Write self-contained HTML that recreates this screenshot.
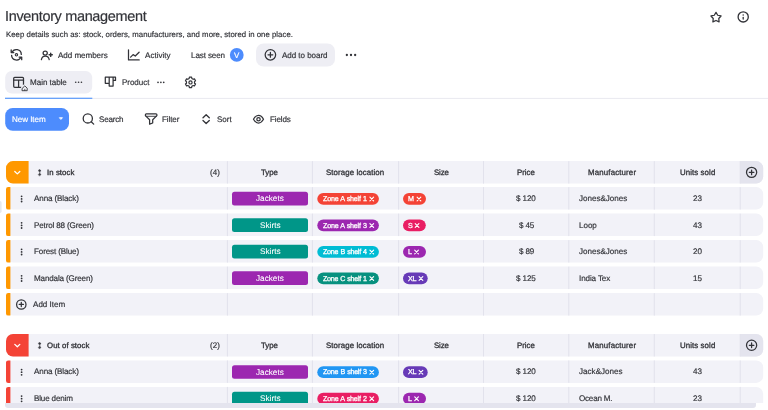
<!DOCTYPE html>
<html><head><meta charset="utf-8"><title>Inventory management</title>
<style>
html,body{margin:0;padding:0;background:#fff;}
body{width:768px;height:410px;position:relative;overflow:hidden;font-family:"Liberation Sans", sans-serif;color:#323338;}
.t{position:absolute;white-space:nowrap;font-family:"Liberation Sans", sans-serif;transform:skewX(.3deg);-webkit-text-stroke:.18px;}
.b{position:absolute;box-sizing:border-box;}
</style></head><body>
<svg class="b" style="left:0;top:0" width="768" height="410" viewBox="0 0 768 410">
<rect x="229.85" y="48" width="13.8" height="13.8" rx="6.9" fill="#4d8cfd"/>
<rect x="256" y="43.6" width="79" height="22.8" rx="7.5" fill="#eeeef4"/>
<rect x="345.7" y="53.85" width="2.3" height="2.3" rx="1.15" fill="#323338"/>
<rect x="349.85" y="53.85" width="2.3" height="2.3" rx="1.15" fill="#323338"/>
<rect x="354" y="53.85" width="2.3" height="2.3" rx="1.15" fill="#323338"/>
<rect x="5.2" y="71" width="87" height="22.5" rx="6.5" fill="#eeeef4"/>
<rect x="74.9" y="81.4" width="1.65" height="1.65" rx="0.82" fill="#323338"/>
<rect x="77.75" y="81.4" width="1.65" height="1.65" rx="0.82" fill="#323338"/>
<rect x="80.6" y="81.4" width="1.65" height="1.65" rx="0.82" fill="#323338"/>
<rect x="157.2" y="81.6" width="1.65" height="1.65" rx="0.82" fill="#323338"/>
<rect x="160.05" y="81.6" width="1.65" height="1.65" rx="0.82" fill="#323338"/>
<rect x="162.9" y="81.6" width="1.65" height="1.65" rx="0.82" fill="#323338"/>
<rect x="5" y="97.9" width="763" height="0.9" fill="#e6e6ee"/>
<rect x="5" y="97.7" width="87.3" height="1.2" fill="#5b9bfb"/>
<rect x="5.2" y="108" width="63.8" height="22.7" rx="7.5" fill="#4d8cfd"/>
<rect x="6" y="161.1" width="757.2" height="22.5" rx="7" fill="#f2f2f8"/>
<path d="M740.2 161.1H756.2A7 7 0 0 1 763.2 168.1V176.6A7 7 0 0 1 756.2 183.6H740.2V161.1z" fill="#e4e4ee"/>
<path d="M13 161.1H28.6V183.6H13A7 7 0 0 1 6 176.6V168.1A7 7 0 0 1 13 161.1z" fill="#ff9800"/>
<rect x="226.9" y="161.1" width="1" height="22.5" fill="#e2e2ec"/>
<rect x="311.9" y="161.1" width="1" height="22.5" fill="#e2e2ec"/>
<rect x="398.1" y="161.1" width="1" height="22.5" fill="#e2e2ec"/>
<rect x="483" y="161.1" width="1" height="22.5" fill="#e2e2ec"/>
<rect x="568.3" y="161.1" width="1" height="22.5" fill="#e2e2ec"/>
<rect x="653.8" y="161.1" width="1" height="22.5" fill="#e2e2ec"/>
<rect x="739.7" y="161.1" width="1" height="22.5" fill="#e2e2ec"/>
<rect x="6" y="187.1" width="757.2" height="22.5" rx="7" fill="#f2f2f8"/>
<path d="M8.2 187.1H10.4V209.6H8.2A2.2 2.2 0 0 1 6 207.4V189.3A2.2 2.2 0 0 1 8.2 187.1z" fill="#ff9800"/>
<rect x="20.7" y="195.4" width="1.8" height="1.8" rx="0.9" fill="#323338"/>
<rect x="20.7" y="198" width="1.8" height="1.8" rx="0.9" fill="#323338"/>
<rect x="20.7" y="200.6" width="1.8" height="1.8" rx="0.9" fill="#323338"/>
<rect x="226.9" y="187.1" width="1" height="22.5" fill="#e2e2ec"/>
<rect x="311.9" y="187.1" width="1" height="22.5" fill="#e2e2ec"/>
<rect x="398.1" y="187.1" width="1" height="22.5" fill="#e2e2ec"/>
<rect x="483" y="187.1" width="1" height="22.5" fill="#e2e2ec"/>
<rect x="568.3" y="187.1" width="1" height="22.5" fill="#e2e2ec"/>
<rect x="653.8" y="187.1" width="1" height="22.5" fill="#e2e2ec"/>
<rect x="739.7" y="187.1" width="1" height="22.5" fill="#e2e2ec"/>
<rect x="232" y="191.85" width="76" height="13.6" rx="2.5" fill="#9c27b0"/>
<rect x="317.3" y="192.9" width="61.6" height="11.9" rx="5.95" fill="#f44336"/>
<rect x="403" y="192.9" width="23" height="11.9" rx="5.95" fill="#f44336"/>
<rect x="6" y="213.6" width="757.2" height="22.5" rx="7" fill="#f2f2f8"/>
<path d="M8.2 213.6H10.4V236.1H8.2A2.2 2.2 0 0 1 6 233.9V215.8A2.2 2.2 0 0 1 8.2 213.6z" fill="#ff9800"/>
<rect x="20.7" y="221.9" width="1.8" height="1.8" rx="0.9" fill="#323338"/>
<rect x="20.7" y="224.5" width="1.8" height="1.8" rx="0.9" fill="#323338"/>
<rect x="20.7" y="227.1" width="1.8" height="1.8" rx="0.9" fill="#323338"/>
<rect x="226.9" y="213.6" width="1" height="22.5" fill="#e2e2ec"/>
<rect x="311.9" y="213.6" width="1" height="22.5" fill="#e2e2ec"/>
<rect x="398.1" y="213.6" width="1" height="22.5" fill="#e2e2ec"/>
<rect x="483" y="213.6" width="1" height="22.5" fill="#e2e2ec"/>
<rect x="568.3" y="213.6" width="1" height="22.5" fill="#e2e2ec"/>
<rect x="653.8" y="213.6" width="1" height="22.5" fill="#e2e2ec"/>
<rect x="739.7" y="213.6" width="1" height="22.5" fill="#e2e2ec"/>
<rect x="232" y="218.35" width="76" height="13.6" rx="2.5" fill="#009688"/>
<rect x="317.3" y="219.4" width="61.6" height="11.9" rx="5.95" fill="#9c27b0"/>
<rect x="403" y="219.4" width="22.8" height="11.9" rx="5.95" fill="#e91e63"/>
<rect x="6" y="240.1" width="757.2" height="22.5" rx="7" fill="#f2f2f8"/>
<path d="M8.2 240.1H10.4V262.6H8.2A2.2 2.2 0 0 1 6 260.4V242.3A2.2 2.2 0 0 1 8.2 240.1z" fill="#ff9800"/>
<rect x="20.7" y="248.4" width="1.8" height="1.8" rx="0.9" fill="#323338"/>
<rect x="20.7" y="251" width="1.8" height="1.8" rx="0.9" fill="#323338"/>
<rect x="20.7" y="253.6" width="1.8" height="1.8" rx="0.9" fill="#323338"/>
<rect x="226.9" y="240.1" width="1" height="22.5" fill="#e2e2ec"/>
<rect x="311.9" y="240.1" width="1" height="22.5" fill="#e2e2ec"/>
<rect x="398.1" y="240.1" width="1" height="22.5" fill="#e2e2ec"/>
<rect x="483" y="240.1" width="1" height="22.5" fill="#e2e2ec"/>
<rect x="568.3" y="240.1" width="1" height="22.5" fill="#e2e2ec"/>
<rect x="653.8" y="240.1" width="1" height="22.5" fill="#e2e2ec"/>
<rect x="739.7" y="240.1" width="1" height="22.5" fill="#e2e2ec"/>
<rect x="232" y="244.85" width="76" height="13.6" rx="2.5" fill="#009688"/>
<rect x="317.3" y="245.9" width="61.6" height="11.9" rx="5.95" fill="#00bcd4"/>
<rect x="403" y="245.9" width="23" height="11.9" rx="5.95" fill="#9c27b0"/>
<rect x="6" y="266.6" width="757.2" height="22.5" rx="7" fill="#f2f2f8"/>
<path d="M8.2 266.6H10.4V289.1H8.2A2.2 2.2 0 0 1 6 286.9V268.8A2.2 2.2 0 0 1 8.2 266.6z" fill="#ff9800"/>
<rect x="20.7" y="274.9" width="1.8" height="1.8" rx="0.9" fill="#323338"/>
<rect x="20.7" y="277.5" width="1.8" height="1.8" rx="0.9" fill="#323338"/>
<rect x="20.7" y="280.1" width="1.8" height="1.8" rx="0.9" fill="#323338"/>
<rect x="226.9" y="266.6" width="1" height="22.5" fill="#e2e2ec"/>
<rect x="311.9" y="266.6" width="1" height="22.5" fill="#e2e2ec"/>
<rect x="398.1" y="266.6" width="1" height="22.5" fill="#e2e2ec"/>
<rect x="483" y="266.6" width="1" height="22.5" fill="#e2e2ec"/>
<rect x="568.3" y="266.6" width="1" height="22.5" fill="#e2e2ec"/>
<rect x="653.8" y="266.6" width="1" height="22.5" fill="#e2e2ec"/>
<rect x="739.7" y="266.6" width="1" height="22.5" fill="#e2e2ec"/>
<rect x="232" y="271.35" width="76" height="13.6" rx="2.5" fill="#9c27b0"/>
<rect x="317.3" y="272.4" width="61.6" height="11.9" rx="5.95" fill="#07917f"/>
<rect x="403" y="272.4" width="24.7" height="11.9" rx="5.95" fill="#673ab7"/>
<rect x="6" y="293.1" width="757.2" height="22.5" rx="7" fill="#f2f2f8"/>
<path d="M8.2 293.1H10.4V315.6H8.2A2.2 2.2 0 0 1 6 313.4V295.3A2.2 2.2 0 0 1 8.2 293.1z" fill="#ff9800"/>
<rect x="226.9" y="293.1" width="1" height="22.5" fill="#e2e2ec"/>
<rect x="311.9" y="293.1" width="1" height="22.5" fill="#e2e2ec"/>
<rect x="398.1" y="293.1" width="1" height="22.5" fill="#e2e2ec"/>
<rect x="483" y="293.1" width="1" height="22.5" fill="#e2e2ec"/>
<rect x="568.3" y="293.1" width="1" height="22.5" fill="#e2e2ec"/>
<rect x="653.8" y="293.1" width="1" height="22.5" fill="#e2e2ec"/>
<rect x="739.7" y="293.1" width="1" height="22.5" fill="#e2e2ec"/>
<rect x="6" y="334" width="757.2" height="22.5" rx="7" fill="#f2f2f8"/>
<path d="M740.2 334H756.2A7 7 0 0 1 763.2 341V349.5A7 7 0 0 1 756.2 356.5H740.2V334z" fill="#e4e4ee"/>
<path d="M13 334H28.6V356.5H13A7 7 0 0 1 6 349.5V341A7 7 0 0 1 13 334z" fill="#f44336"/>
<rect x="226.9" y="334" width="1" height="22.5" fill="#e2e2ec"/>
<rect x="311.9" y="334" width="1" height="22.5" fill="#e2e2ec"/>
<rect x="398.1" y="334" width="1" height="22.5" fill="#e2e2ec"/>
<rect x="483" y="334" width="1" height="22.5" fill="#e2e2ec"/>
<rect x="568.3" y="334" width="1" height="22.5" fill="#e2e2ec"/>
<rect x="653.8" y="334" width="1" height="22.5" fill="#e2e2ec"/>
<rect x="739.7" y="334" width="1" height="22.5" fill="#e2e2ec"/>
<rect x="6" y="360.4" width="757.2" height="22.5" rx="7" fill="#f2f2f8"/>
<path d="M8.2 360.4H10.4V382.9H8.2A2.2 2.2 0 0 1 6 380.7V362.6A2.2 2.2 0 0 1 8.2 360.4z" fill="#f44336"/>
<rect x="20.7" y="368.7" width="1.8" height="1.8" rx="0.9" fill="#323338"/>
<rect x="20.7" y="371.3" width="1.8" height="1.8" rx="0.9" fill="#323338"/>
<rect x="20.7" y="373.9" width="1.8" height="1.8" rx="0.9" fill="#323338"/>
<rect x="226.9" y="360.4" width="1" height="22.5" fill="#e2e2ec"/>
<rect x="311.9" y="360.4" width="1" height="22.5" fill="#e2e2ec"/>
<rect x="398.1" y="360.4" width="1" height="22.5" fill="#e2e2ec"/>
<rect x="483" y="360.4" width="1" height="22.5" fill="#e2e2ec"/>
<rect x="568.3" y="360.4" width="1" height="22.5" fill="#e2e2ec"/>
<rect x="653.8" y="360.4" width="1" height="22.5" fill="#e2e2ec"/>
<rect x="739.7" y="360.4" width="1" height="22.5" fill="#e2e2ec"/>
<rect x="232" y="365.15" width="76" height="13.6" rx="2.5" fill="#9c27b0"/>
<rect x="317.3" y="366.2" width="61.6" height="11.9" rx="5.95" fill="#2196f3"/>
<rect x="403" y="366.2" width="24.7" height="11.9" rx="5.95" fill="#673ab7"/>
<rect x="6" y="386.9" width="757.2" height="22.5" rx="7" fill="#f2f2f8"/>
<path d="M8.2 386.9H10.4V409.4H8.2A2.2 2.2 0 0 1 6 407.2V389.1A2.2 2.2 0 0 1 8.2 386.9z" fill="#f44336"/>
<rect x="20.7" y="395.2" width="1.8" height="1.8" rx="0.9" fill="#323338"/>
<rect x="20.7" y="397.8" width="1.8" height="1.8" rx="0.9" fill="#323338"/>
<rect x="20.7" y="400.4" width="1.8" height="1.8" rx="0.9" fill="#323338"/>
<rect x="226.9" y="386.9" width="1" height="22.5" fill="#e2e2ec"/>
<rect x="311.9" y="386.9" width="1" height="22.5" fill="#e2e2ec"/>
<rect x="398.1" y="386.9" width="1" height="22.5" fill="#e2e2ec"/>
<rect x="483" y="386.9" width="1" height="22.5" fill="#e2e2ec"/>
<rect x="568.3" y="386.9" width="1" height="22.5" fill="#e2e2ec"/>
<rect x="653.8" y="386.9" width="1" height="22.5" fill="#e2e2ec"/>
<rect x="739.7" y="386.9" width="1" height="22.5" fill="#e2e2ec"/>
<rect x="232" y="391.65" width="76" height="13.6" rx="2.5" fill="#009688"/>
<rect x="317.3" y="392.7" width="61.6" height="11.9" rx="5.95" fill="#e91e63"/>
<rect x="403" y="392.7" width="23" height="11.9" rx="5.95" fill="#9c27b0"/>
<rect x="-2" y="201" width="3.6" height="12" rx="1.8" fill="#e6e9ef"/>
</svg>
<div class="b" style="left:0;top:0;width:768px;height:410px;will-change:transform">
<div class="t" style="top:7.78px;font-size:14.5px;line-height:17.4px;letter-spacing:-0.350px;left:5.3px;">Inventory management</div>
<div class="t" style="top:29.62px;font-size:7.8px;line-height:9.36px;letter-spacing:0.027px;left:5.6px;">Keep details such as: stock, orders, manufacturers, and more, stored in one place.</div>
<div class="t" style="top:50.73px;font-size:8.1px;line-height:9.72px;letter-spacing:-0.067px;left:57.7px;">Add members</div>
<div class="t" style="top:50.73px;font-size:8.1px;line-height:9.72px;letter-spacing:-0.024px;left:145.3px;">Activity</div>
<div class="t" style="top:50.73px;font-size:8.1px;line-height:9.72px;letter-spacing:-0.129px;left:190.7px;">Last seen</div>
<div class="t" style="top:50.93px;font-size:8px;line-height:9.6px;color:#fff;left:234.05px;">V</div>
<div class="t" style="top:50.73px;font-size:8.1px;line-height:9.72px;letter-spacing:-0.076px;left:281.7px;">Add to board</div>
<div class="t" style="top:77.73px;font-size:8.1px;line-height:9.72px;letter-spacing:-0.059px;left:30px;">Main table</div>
<div class="t" style="top:77.73px;font-size:8.1px;line-height:9.72px;letter-spacing:-0.080px;left:121.7px;">Product</div>
<div class="t" style="top:114.73px;font-size:8.1px;line-height:9.72px;color:#fff;letter-spacing:-0.080px;left:12.2px;">New Item</div>
<div class="t" style="top:114.73px;font-size:8.1px;line-height:9.72px;letter-spacing:-0.218px;left:99.4px;">Search</div>
<div class="t" style="top:114.73px;font-size:8.1px;line-height:9.72px;letter-spacing:-0.125px;left:162.4px;">Filter</div>
<div class="t" style="top:114.73px;font-size:8.1px;line-height:9.72px;letter-spacing:-0.053px;left:217.4px;">Sort</div>
<div class="t" style="top:114.73px;font-size:8.1px;line-height:9.72px;letter-spacing:-0.141px;left:269.7px;">Fields</div>
<div class="t" style="top:168.12px;font-size:7.8px;line-height:9.36px;letter-spacing:0.072px;left:47.2px;-webkit-text-stroke:0.330px #323338;">In stock</div>
<div class="t" style="top:168.13px;font-size:8px;line-height:9.6px;letter-spacing:0.123px;left:210.22px;">(4)</div>
<div class="t" style="top:168.22px;font-size:7.9px;line-height:9.48px;letter-spacing:-0.040px;left:261.38px;-webkit-text-stroke:0.300px #323338;">Type</div>
<div class="t" style="top:168.22px;font-size:7.9px;line-height:9.48px;letter-spacing:0.070px;left:326.43px;-webkit-text-stroke:0.300px #323338;">Storage location</div>
<div class="t" style="top:168.22px;font-size:7.9px;line-height:9.48px;letter-spacing:-0.152px;left:433.57px;-webkit-text-stroke:0.300px #323338;">Size</div>
<div class="t" style="top:168.22px;font-size:7.9px;line-height:9.48px;letter-spacing:-0.027px;left:517.19px;-webkit-text-stroke:0.300px #323338;">Price</div>
<div class="t" style="top:168.22px;font-size:7.9px;line-height:9.48px;letter-spacing:0.138px;left:587.52px;-webkit-text-stroke:0.300px #323338;">Manufacturer</div>
<div class="t" style="top:168.22px;font-size:7.9px;line-height:9.48px;letter-spacing:0.069px;left:679.58px;-webkit-text-stroke:0.300px #323338;">Units sold</div>
<div class="t" style="top:194.03px;font-size:8.1px;line-height:9.72px;letter-spacing:-0.133px;left:33.7px;">Anna (Black)</div>
<div class="t" style="top:194.34px;font-size:8.2px;line-height:9.84px;color:#fff;letter-spacing:-0.002px;left:256.1px;-webkit-text-stroke:0.080px #fff;">Jackets</div>
<div class="t" style="top:195.04px;font-size:7.2px;line-height:8.64px;color:#fff;letter-spacing:-0.236px;left:322.5px;-webkit-text-stroke:0.280px #fff;word-spacing:0.500px;">Zone A shelf 1</div>
<div class="t" style="top:195.04px;font-size:7.2px;line-height:8.64px;color:#fff;letter-spacing:0.055px;left:408.2px;-webkit-text-stroke:0.280px #fff;word-spacing:0.500px;">M</div>
<div class="t" style="top:194.03px;font-size:8.1px;line-height:9.72px;letter-spacing:-0.123px;left:516.39px;">$ 120</div>
<div class="t" style="top:194.03px;font-size:8.1px;line-height:9.72px;letter-spacing:-0.042px;left:578.7px;">Jones&amp;Jones</div>
<div class="t" style="top:194.03px;font-size:8.1px;line-height:9.72px;letter-spacing:0.017px;left:692.76px;">23</div>
<div class="t" style="top:220.53px;font-size:8.1px;line-height:9.72px;letter-spacing:-0.164px;left:33.7px;">Petrol 88 (Green)</div>
<div class="t" style="top:220.84px;font-size:8.2px;line-height:9.84px;color:#fff;letter-spacing:0.013px;left:259.71px;-webkit-text-stroke:0.080px #fff;">Skirts</div>
<div class="t" style="top:221.54px;font-size:7.2px;line-height:8.64px;color:#fff;letter-spacing:-0.236px;left:322.5px;-webkit-text-stroke:0.280px #fff;word-spacing:0.500px;">Zone A shelf 3</div>
<div class="t" style="top:221.54px;font-size:7.2px;line-height:8.64px;color:#fff;letter-spacing:-0.642px;left:408.2px;-webkit-text-stroke:0.280px #fff;word-spacing:0.500px;">S</div>
<div class="t" style="top:220.53px;font-size:8.1px;line-height:9.72px;letter-spacing:-0.154px;left:518.62px;">$ 45</div>
<div class="t" style="top:220.53px;font-size:8.1px;line-height:9.72px;letter-spacing:-0.067px;left:578.7px;">Loop</div>
<div class="t" style="top:220.53px;font-size:8.1px;line-height:9.72px;letter-spacing:0.017px;left:692.76px;">43</div>
<div class="t" style="top:247.03px;font-size:8.1px;line-height:9.72px;letter-spacing:-0.141px;left:33.7px;">Forest (Blue)</div>
<div class="t" style="top:247.34px;font-size:8.2px;line-height:9.84px;color:#fff;letter-spacing:0.013px;left:259.71px;-webkit-text-stroke:0.080px #fff;">Skirts</div>
<div class="t" style="top:248.04px;font-size:7.2px;line-height:8.64px;color:#fff;letter-spacing:-0.293px;left:322.5px;-webkit-text-stroke:0.280px #fff;word-spacing:0.500px;">Zone B shelf 4</div>
<div class="t" style="top:248.04px;font-size:7.2px;line-height:8.64px;color:#fff;letter-spacing:-0.345px;left:408.2px;-webkit-text-stroke:0.280px #fff;word-spacing:0.500px;">L</div>
<div class="t" style="top:247.03px;font-size:8.1px;line-height:9.72px;letter-spacing:-0.154px;left:518.62px;">$ 89</div>
<div class="t" style="top:247.03px;font-size:8.1px;line-height:9.72px;letter-spacing:-0.042px;left:578.7px;">Jones&amp;Jones</div>
<div class="t" style="top:247.03px;font-size:8.1px;line-height:9.72px;letter-spacing:0.017px;left:692.76px;">20</div>
<div class="t" style="top:273.53px;font-size:8.1px;line-height:9.72px;letter-spacing:-0.163px;left:33.7px;">Mandala (Green)</div>
<div class="t" style="top:273.84px;font-size:8.2px;line-height:9.84px;color:#fff;letter-spacing:-0.002px;left:256.1px;-webkit-text-stroke:0.080px #fff;">Jackets</div>
<div class="t" style="top:274.54px;font-size:7.2px;line-height:8.64px;color:#fff;letter-spacing:-0.321px;left:322.5px;-webkit-text-stroke:0.280px #fff;word-spacing:0.500px;">Zone C shelf 1</div>
<div class="t" style="top:274.54px;font-size:7.2px;line-height:8.64px;color:#fff;letter-spacing:-0.371px;left:408.2px;-webkit-text-stroke:0.280px #fff;word-spacing:0.500px;">XL</div>
<div class="t" style="top:273.53px;font-size:8.1px;line-height:9.72px;letter-spacing:-0.123px;left:516.39px;">$ 125</div>
<div class="t" style="top:273.53px;font-size:8.1px;line-height:9.72px;letter-spacing:-0.122px;left:578.7px;">India Tex</div>
<div class="t" style="top:273.53px;font-size:8.1px;line-height:9.72px;letter-spacing:0.017px;left:692.76px;">15</div>
<div class="t" style="top:300.03px;font-size:8.1px;line-height:9.72px;letter-spacing:-0.032px;left:32.7px;">Add Item</div>
<div class="t" style="top:341.02px;font-size:7.8px;line-height:9.36px;letter-spacing:0.070px;left:47.2px;-webkit-text-stroke:0.330px #323338;">Out of stock</div>
<div class="t" style="top:341.03px;font-size:8px;line-height:9.6px;letter-spacing:0.123px;left:210.22px;">(2)</div>
<div class="t" style="top:341.12px;font-size:7.9px;line-height:9.48px;letter-spacing:-0.040px;left:261.38px;-webkit-text-stroke:0.300px #323338;">Type</div>
<div class="t" style="top:341.12px;font-size:7.9px;line-height:9.48px;letter-spacing:0.070px;left:326.43px;-webkit-text-stroke:0.300px #323338;">Storage location</div>
<div class="t" style="top:341.12px;font-size:7.9px;line-height:9.48px;letter-spacing:-0.152px;left:433.57px;-webkit-text-stroke:0.300px #323338;">Size</div>
<div class="t" style="top:341.12px;font-size:7.9px;line-height:9.48px;letter-spacing:-0.027px;left:517.19px;-webkit-text-stroke:0.300px #323338;">Price</div>
<div class="t" style="top:341.12px;font-size:7.9px;line-height:9.48px;letter-spacing:0.138px;left:587.52px;-webkit-text-stroke:0.300px #323338;">Manufacturer</div>
<div class="t" style="top:341.12px;font-size:7.9px;line-height:9.48px;letter-spacing:0.069px;left:679.58px;-webkit-text-stroke:0.300px #323338;">Units sold</div>
<div class="t" style="top:367.33px;font-size:8.1px;line-height:9.72px;letter-spacing:-0.133px;left:33.7px;">Anna (Black)</div>
<div class="t" style="top:367.64px;font-size:8.2px;line-height:9.84px;color:#fff;letter-spacing:-0.002px;left:256.1px;-webkit-text-stroke:0.080px #fff;">Jackets</div>
<div class="t" style="top:368.34px;font-size:7.2px;line-height:8.64px;color:#fff;letter-spacing:-0.293px;left:322.5px;-webkit-text-stroke:0.280px #fff;word-spacing:0.500px;">Zone B shelf 3</div>
<div class="t" style="top:368.34px;font-size:7.2px;line-height:8.64px;color:#fff;letter-spacing:-0.371px;left:408.2px;-webkit-text-stroke:0.280px #fff;word-spacing:0.500px;">XL</div>
<div class="t" style="top:367.33px;font-size:8.1px;line-height:9.72px;letter-spacing:-0.123px;left:516.39px;">$ 120</div>
<div class="t" style="top:367.33px;font-size:8.1px;line-height:9.72px;letter-spacing:0.001px;left:578.7px;">Jack&amp;Jones</div>
<div class="t" style="top:367.33px;font-size:8.1px;line-height:9.72px;letter-spacing:0.017px;left:692.76px;">43</div>
<div class="t" style="top:393.83px;font-size:8.1px;line-height:9.72px;letter-spacing:-0.175px;left:33.7px;">Blue denim</div>
<div class="t" style="top:394.14px;font-size:8.2px;line-height:9.84px;color:#fff;letter-spacing:0.013px;left:259.71px;-webkit-text-stroke:0.080px #fff;">Skirts</div>
<div class="t" style="top:394.84px;font-size:7.2px;line-height:8.64px;color:#fff;letter-spacing:-0.236px;left:322.5px;-webkit-text-stroke:0.280px #fff;word-spacing:0.500px;">Zone A shelf 2</div>
<div class="t" style="top:394.84px;font-size:7.2px;line-height:8.64px;color:#fff;letter-spacing:-0.345px;left:408.2px;-webkit-text-stroke:0.280px #fff;word-spacing:0.500px;">L</div>
<div class="t" style="top:393.83px;font-size:8.1px;line-height:9.72px;letter-spacing:-0.123px;left:516.39px;">$ 120</div>
<div class="t" style="top:393.83px;font-size:8.1px;line-height:9.72px;letter-spacing:-0.243px;left:578.7px;">Ocean M.</div>
<div class="t" style="top:393.83px;font-size:8.1px;line-height:9.72px;letter-spacing:0.017px;left:692.76px;">23</div>
</div>
<svg class="b" style="left:0;top:0" width="768" height="410" viewBox="0 0 768 410" fill="none" stroke-linecap="round" stroke-linejoin="round">
<g stroke="#323338" stroke-width="1.25" fill="none"><path d="M716 12.3L717.7 15.25L721.04 15.96L718.76 18.5L719.12 21.89L716 20.5L712.88 21.89L713.24 18.5L710.96 15.96L714.3 15.25z"/></g>
<g stroke="#323338" stroke-width="1.3" fill="none"><circle cx="743.2" cy="16.9" r="5.1"/><path d="M743.2 17.500v1.600"/><circle cx="743.2" cy="14.900" r=".75" fill="#323338" stroke="none"/></g>
<g stroke="#323338" stroke-width="1.3" fill="none"><path d="M11.200 50v2.600h2.600M11.900 52.600A4.900 4.900 0 0 1 21.300 54.400M21.700 59.700v-2.600h-2.600M21 57.100A4.900 4.900 0 0 1 11.600 55.300"/><circle cx="16.450" cy="54.850" r="1.200" stroke-width="1.100"/></g>
<g stroke="#323338" stroke-width="1.25" fill="none"><circle cx="45.200" cy="53.100" r="2.100"/><path d="M41.400 59.700c.3-2.300 1.800-3.700 3.900-3.700s3.600 1.400 3.900 3.700"/><path d="M50.700 53.200v3.200M49.100 54.800h3.200" stroke-width="1.400"/></g>
<g stroke="#323338" stroke-width="1.25" fill="none"><path d="M128.500 49.800v10.100h10.700"/><path d="M130.600 57.100l2.500-2.500 2.200 1.400 3.800-3.800"/></g>
<g stroke="#323338" stroke-width="1.25" fill="none"><circle cx="270.4" cy="54.8" r="5.25"/><path d="M270.4 52.4v4.8M268 54.8h4.8"/></g>
<g stroke="#323338" stroke-width="1.25" fill="none"><rect x="13.700" y="77.300" width="9.800" height="10" rx="1"/><path d="M13.700 80.200h9.800M18.600 80.200v7.100"/></g>
<g stroke="#323338" stroke-width="1.25" fill="none"><circle cx="24.700" cy="88.200" r="3.700" fill="#eeeef4" stroke="none"/><path d="M22.400 88.200l2.400-2.300 2.400 2.300v2.500h-4.800z" stroke-width=".9"/><path d="M24.800 90.500v-1.200" stroke-width=".8"/></g>
<g stroke="#323338" stroke-width="1.25" fill="none"><path d="M105.300 77.200h3.900v6.100h-3.900zM109.200 77.200h3.900v8.800h-3.900zM113.100 77.200h2.400v3.200h-2.400z"/></g>
<g stroke="#323338" stroke-width="1.2" fill="none"><path d="M189.4 77.22L191.6 77.22L191.83 78.52L193.19 79.31L194.44 78.85L195.54 80.76L194.52 81.62L194.52 83.18L195.54 84.04L194.44 85.95L193.19 85.49L191.83 86.28L191.6 87.58L189.4 87.58L189.17 86.28L187.81 85.49L186.56 85.95L185.46 84.04L186.48 83.18L186.48 81.62L185.46 80.76L186.56 78.85L187.81 79.31L189.17 78.52z"/><circle cx="190.500" cy="82.400" r="1.600"/></g>
<g stroke="#fff" stroke-width="0.8" fill="none"><path d="M59.700 117.700h2.800l-1.400 1.500z" fill="#fff"/></g>
<g stroke="#323338" stroke-width="1.3" fill="none"><circle cx="87.800" cy="118.400" r="4.600"/><path d="M91.200 121.700l2.500 2.400"/></g>
<g stroke="#323338" stroke-width="1.25" fill="none"><path d="M146.200 113.900h9.800q.9 0 .9.900v.8l-4.200 4.100v3.300l-3.100 1.200v-4.500l-4.200-4.100v-.8q0-.9.900-.9z"/><path d="M146 116.300h10.300" stroke-width=".9"/></g>
<g stroke="#323338" stroke-width="1.3" fill="none"><path d="M203 117.700l3.150-3 3.150 3M203 120.500l3.150 3 3.150-3"/></g>
<g stroke="#323338" stroke-width="1.25" fill="none"><path d="M253.500 119.200c1.400-2.500 3.100-3.800 5-3.800s3.600 1.300 5 3.800c-1.400 2.500-3.100 3.800-5 3.800s-3.600-1.300-5-3.800z"/><circle cx="258.500" cy="119.200" r="1.700"/></g>
<g stroke="#fff" stroke-width="1.3" fill="none"><path d="M14.800 171.45l2.500 2.400 2.500-2.400"/></g>
<g stroke="#323338" stroke-width="1.25" fill="none"><path d="M39.750 169.45l1.250 1.600h-2.500zM39.750 175.85l1.250-1.600h-2.500z" fill="#323338" stroke-width=".5"/><path d="M39.750 171.05v1.100M39.750 173.15v1.100" stroke-width="1"/></g>
<g stroke="#323338" stroke-width="1.25" fill="none"><circle cx="751.6" cy="172.35" r="5.1"/><path d="M751.6 170.05v4.6M749.3 172.35h4.6"/></g>
<g stroke="#fff" stroke-width="1.15" fill="none"><path d="M369.9 197.15l3.700 3.700M373.6 197.15l-3.700 3.700"/></g>
<g stroke="#fff" stroke-width="1.15" fill="none"><path d="M417.1 197.15l3.700 3.700M420.8 197.15l-3.700 3.700"/></g>
<g stroke="#fff" stroke-width="1.15" fill="none"><path d="M369.9 223.65l3.700 3.700M373.6 223.65l-3.700 3.700"/></g>
<g stroke="#fff" stroke-width="1.15" fill="none"><path d="M415.2 223.65l3.700 3.700M418.9 223.65l-3.700 3.700"/></g>
<g stroke="#fff" stroke-width="1.15" fill="none"><path d="M369.9 250.15l3.700 3.700M373.6 250.15l-3.700 3.700"/></g>
<g stroke="#fff" stroke-width="1.15" fill="none"><path d="M414.7 250.15l3.700 3.700M418.4 250.15l-3.700 3.700"/></g>
<g stroke="#fff" stroke-width="1.15" fill="none"><path d="M369.9 276.65l3.700 3.700M373.6 276.65l-3.700 3.700"/></g>
<g stroke="#fff" stroke-width="1.15" fill="none"><path d="M419.1 276.65l3.700 3.700M422.8 276.65l-3.700 3.700"/></g>
<g stroke="#323338" stroke-width="1.25" fill="none"><circle cx="21.3" cy="304.45" r="4.7"/><path d="M21.3 302.35v4.2M19.2 304.45h4.2"/></g>
<g stroke="#fff" stroke-width="1.3" fill="none"><path d="M14.800 344.35l2.500 2.400 2.500-2.400"/></g>
<g stroke="#323338" stroke-width="1.25" fill="none"><path d="M39.750 342.35l1.250 1.600h-2.500zM39.750 348.75l1.250-1.600h-2.500z" fill="#323338" stroke-width=".5"/><path d="M39.750 343.95v1.100M39.750 346.05v1.100" stroke-width="1"/></g>
<g stroke="#323338" stroke-width="1.25" fill="none"><circle cx="751.6" cy="345.25" r="5.1"/><path d="M751.6 342.95v4.6M749.3 345.25h4.6"/></g>
<g stroke="#fff" stroke-width="1.15" fill="none"><path d="M369.9 370.45l3.700 3.700M373.6 370.45l-3.700 3.700"/></g>
<g stroke="#fff" stroke-width="1.15" fill="none"><path d="M419.1 370.45l3.700 3.700M422.8 370.45l-3.700 3.700"/></g>
<g stroke="#fff" stroke-width="1.15" fill="none"><path d="M369.9 396.95l3.700 3.700M373.6 396.95l-3.700 3.700"/></g>
<g stroke="#fff" stroke-width="1.15" fill="none"><path d="M414.7 396.95l3.700 3.700M418.4 396.95l-3.700 3.700"/></g>
</svg>
<div class="b" style="left:0;top:403px;width:768px;height:7px;background:#fff"></div>
<div class="b" style="left:5px;top:403px;width:750.500px;height:5px;background:#e4e4ee;border-radius:0 0 3px 3px"></div>
</body></html>
